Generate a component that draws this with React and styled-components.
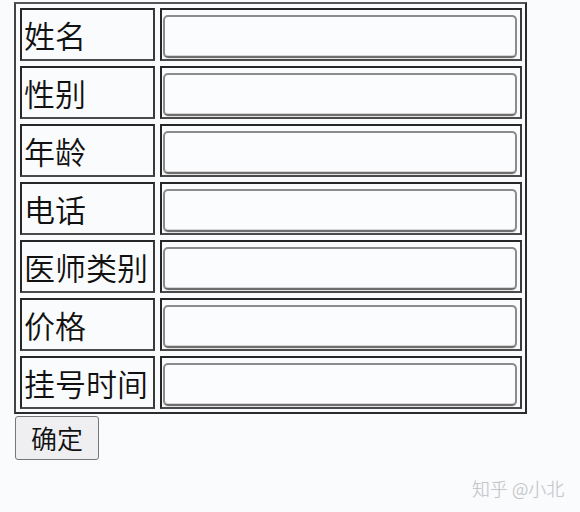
import React from "react";
import styled, { createGlobalStyle } from "styled-components";

const Global = createGlobalStyle`
  html, body { margin: 0; padding: 0; background: #fafbfd; }
  body { font-family: "Noto Sans CJK SC", "Noto Sans", sans-serif; }
  #root { width: 580px; height: 512px; position: relative; }
`;

const Page = styled.div`
  width: 580px;
  height: 512px;
  box-sizing: border-box;
  padding: 2px 0 0 14px;
  display: flex;
  flex-direction: column;
  align-items: flex-start;
  gap: 2px;
`;

const Form = styled.div`
  display: grid;
  grid-template-columns: 135px 362px;
  grid-auto-rows: 53px;
  gap: 5px;
  padding: 4px 3px 3px 4px;
  border: 2px solid #2b2b2b;
  border-top-color: #555;
  border-left-color: #444;
`;

const Cell = styled.div`
  box-sizing: border-box;
  border: 2px solid #262626;
  border-bottom-color: #4a4a4a;
  border-right-color: #3a3a3a;
  display: flex;
  align-items: ${(p) => (p.$input ? "flex-end" : "center")};
  padding: ${(p) => (p.$input ? "0 3px 1px 1px" : "0 0 0 2px")};
`;

const Label = styled.span`
  font-size: 31px;
  font-weight: 350;
  line-height: 1;
  color: #111;
  white-space: nowrap;
`;

const Field = styled.input`
  box-sizing: border-box;
  width: 100%;
  height: 43px;
  border: 2px solid #8c8c8c;
  border-bottom-color: #6e6e6e;
  border-radius: 5px;
  background: #fbfcfe;
  box-shadow: inset 0 -1px 0 #d6d6d6, 0 1px 0 #e4e4e4;
  outline: none;
`;

const Button = styled.button`
  box-sizing: border-box;
  margin-left: 1px;
  width: 84px;
  height: 44px;
  border: 1px solid #767676;
  border-radius: 3px;
  background: #efeff1;
  font-family: "Noto Sans CJK SC", "Noto Sans", sans-serif;
  font-size: 26px;
  font-weight: 350;
  line-height: 1;
  color: #111;
  padding: 0;
`;

const Watermark = styled.div`
  position: absolute;
  left: 472px;
  top: 475px;
  font-family: "Noto Sans CJK SC", "Noto Sans", sans-serif;
  font-size: 18px;
  font-weight: 300;
  color: #c2c3c6;
  text-shadow: 0 0 1px #e6e6e6;
  white-space: nowrap;
`;

const fields = ["姓名", "性别", "年龄", "电话", "医师类别", "价格", "挂号时间"];

export default function App() {
  return (
    <>
      <Global />
      <Page>
        <Form>
          {fields.map((f) => (
            <React.Fragment key={f}>
              <Cell>
                <Label>{f}</Label>
              </Cell>
              <Cell $input>
                <Field type="text" />
              </Cell>
            </React.Fragment>
          ))}
        </Form>
        <Button>确定</Button>
      </Page>
      <Watermark>知乎 @小北</Watermark>
    </>
  );
}
